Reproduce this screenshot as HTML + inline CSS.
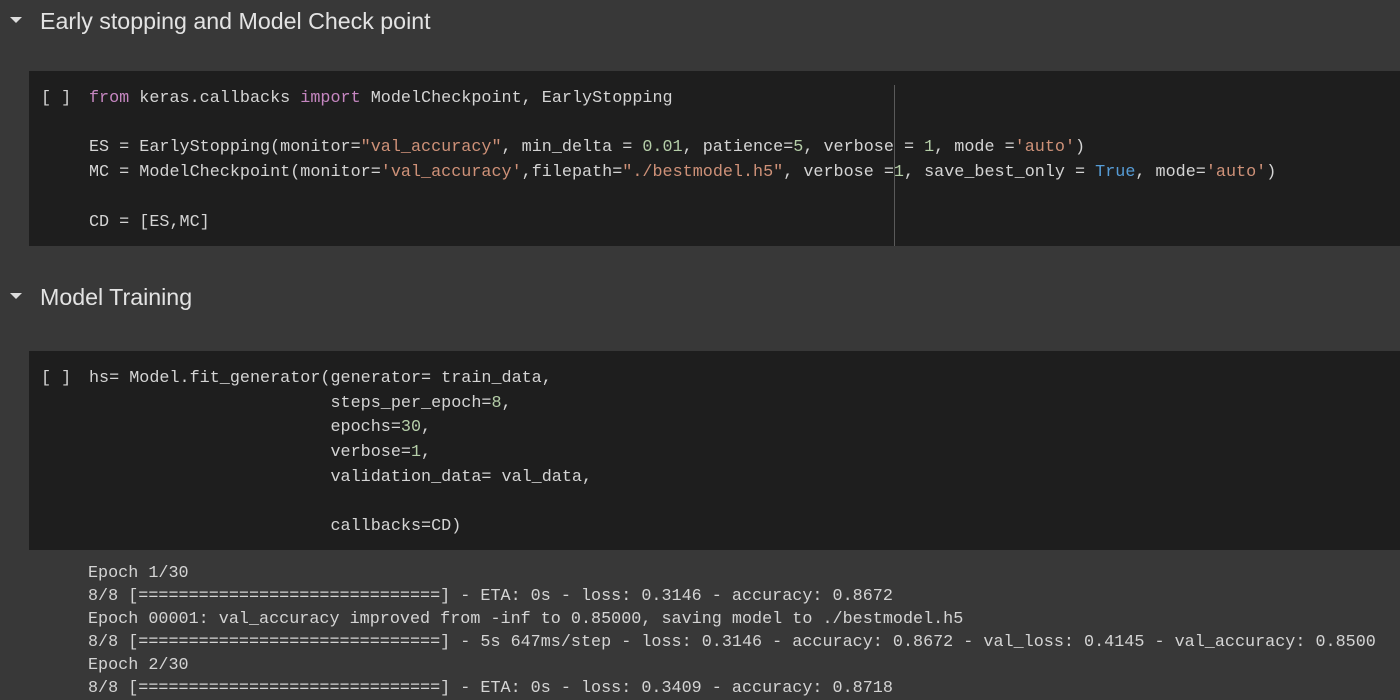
<!DOCTYPE html>
<html><head><meta charset="utf-8"><style>
body{margin:0;width:1400px;height:695px;background:#383838;overflow:hidden;position:relative;font-family:"Liberation Sans",sans-serif}
.h{position:absolute;left:40px;color:#e3e3e3;font-size:23.2px;line-height:30px}
.tri{position:absolute;left:10px;width:0;height:0;border-left:6px solid transparent;border-right:6px solid transparent;border-top:6px solid #ddd}
.cell{position:absolute;left:29px;right:0;background:#1e1e1e}
pre{margin:0;position:absolute;font-family:"Liberation Mono",monospace;font-size:16.77px;color:#d4d4d4}
.code{left:89px;line-height:24.7px}
.br{left:41px;line-height:24.7px}
.k{color:#c586c0}.s{color:#ce9178}.n{color:#b5cea8}.b{color:#569cd6}
.out{left:88px;top:563px;line-height:22.9px;color:#d4d4d4}
</style></head><body>
<div class="tri" style="top:17px"></div>
<div class="h" style="top:6px">Early stopping and Model Check point</div>
<div class="cell" style="top:71px;height:175px"></div>
<div style="position:absolute;left:894px;top:85px;width:1px;height:161px;background:#5a5a5a"></div>
<pre class="br" style="top:87px">[ ]</pre>
<pre class="code" style="top:87px"><span class="k">from</span> keras.callbacks <span class="k">import</span> ModelCheckpoint, EarlyStopping

ES = EarlyStopping(monitor=<span class="s">"val_accuracy"</span>, min_delta = <span class="n">0.01</span>, patience=<span class="n">5</span>, verbose = <span class="n">1</span>, mode =<span class="s">'auto'</span>)
MC = ModelCheckpoint(monitor=<span class="s">'val_accuracy'</span>,filepath=<span class="s">"./bestmodel.h5"</span>, verbose =<span class="n">1</span>, save_best_only = <span class="b">True</span>, mode=<span class="s">'auto'</span>)

CD = [ES,MC]</pre>
<div class="tri" style="top:293px"></div>
<div class="h" style="top:282px">Model Training</div>
<div class="cell" style="top:351px;height:199px"></div>
<pre class="br" style="top:367px">[ ]</pre>
<pre class="code" style="top:367px">hs= Model.fit_generator(generator= train_data,
                        steps_per_epoch=<span class="n">8</span>,
                        epochs=<span class="n">30</span>,
                        verbose=<span class="n">1</span>,
                        validation_data= val_data,

                        callbacks=CD)</pre>
<pre class="out">Epoch 1/30
8/8 [==============================] - ETA: 0s - loss: 0.3146 - accuracy: 0.8672
Epoch 00001: val_accuracy improved from -inf to 0.85000, saving model to ./bestmodel.h5
8/8 [==============================] - 5s 647ms/step - loss: 0.3146 - accuracy: 0.8672 - val_loss: 0.4145 - val_accuracy: 0.8500
Epoch 2/30
8/8 [==============================] - ETA: 0s - loss: 0.3409 - accuracy: 0.8718</pre>
</body></html>
